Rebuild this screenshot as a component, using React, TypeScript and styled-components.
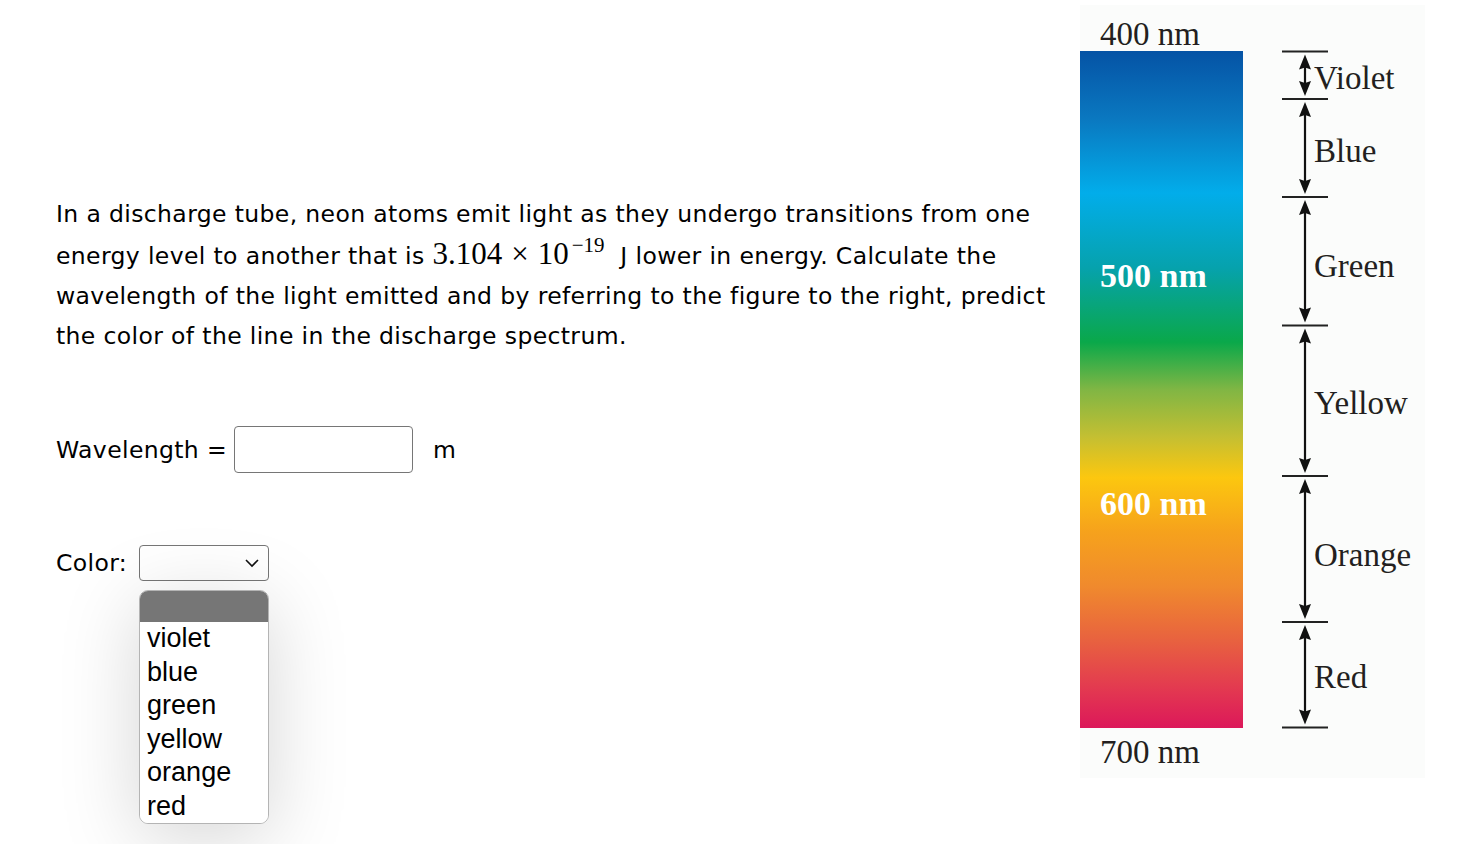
import React from "react";
import styled, { createGlobalStyle } from "styled-components";

const GlobalStyle = createGlobalStyle`
  html, body { margin: 0; padding: 0; background: #ffffff; }
  body { font-family: "DejaVu Sans", Verdana, sans-serif; color: #000; }
`;

const Page = styled.div`
  display: flex;
  align-items: flex-start;
  gap: 24px;
  padding: 5px 0 0 56px;
  width: 1468px;
  height: 844px;
  box-sizing: border-box;
  overflow: hidden;
`;

const LeftColumn = styled.div`
  width: 1000px;
  padding-top: 189px;
  font-size: 23.5px;
  letter-spacing: 0.37px;
`;

const Question = styled.p`
  margin: 0;
  line-height: 40px;
`;

const MathText = styled.span`
  font-family: "Liberation Serif", "DejaVu Serif", serif;
  font-size: 31px;
  letter-spacing: 0;
`;

const Times = styled.span`
  margin: 0 9px;
`;

const Sup = styled.sup`
  font-size: 21px;
  vertical-align: 12px;
  line-height: 0;
  margin-left: 3px;
  padding-right: 8px;
`;

const Row = styled.div<{ $top: number }>`
  display: flex;
  align-items: center;
  margin-top: ${(p) => p.$top}px;
`;

const Label = styled.span<{ $gap: number }>`
  margin-right: ${(p) => p.$gap}px;
`;

const TextInput = styled.input`
  width: 179px;
  height: 47px;
  box-sizing: border-box;
  border: 1.5px solid #767676;
  border-radius: 4px;
  background: #fff;
  margin: 0;
`;

const Unit = styled.span`
  margin-left: 20px;
`;

const SelectWrap = styled.div`
  position: relative;
  letter-spacing: 0;
`;

const SelectBox = styled.div`
  width: 130px;
  height: 36px;
  box-sizing: border-box;
  border: 1.5px solid #767676;
  border-radius: 4px;
  background: #fff;
  display: flex;
  align-items: center;
  justify-content: flex-end;
  padding-right: 8px;
`;

const Popup = styled.ul`
  position: absolute;
  top: 45px;
  left: 0;
  width: 130px;
  margin: 0;
  padding: 0;
  list-style: none;
  box-sizing: border-box;
  border: 1.5px solid #b4b4b4;
  border-radius: 9px;
  background: #fff;
  overflow: hidden;
  box-shadow: 0 14px 80px rgba(0, 0, 0, 0.17);
  font-family: "Liberation Sans", Arial, sans-serif;
  font-size: 27px;
`;

const Option = styled.li<{ $selected?: boolean }>`
  height: ${(p) => (p.$selected ? 31 : 33.5)}px;
  line-height: 33.5px;
  padding-left: 7px;
  background: ${(p) => (p.$selected ? "#767676" : "#fff")};
  color: #000;
`;

const Figure = styled.div`
  width: 345px;
  height: 773px;
  background: #fbfcfb;
  flex-shrink: 0;
`;

const colors = ["violet", "blue", "green", "yellow", "orange", "red"];

const ticks = [46.5, 94, 192, 320.5, 471, 617, 722.5];
const bands = [
  { name: "Violet", y: 83.5 },
  { name: "Blue", y: 157 },
  { name: "Green", y: 272 },
  { name: "Yellow", y: 409 },
  { name: "Orange", y: 561 },
  { name: "Red", y: 683 },
];

const AX = 225;

function ArrowHead({ tip, dir }: { tip: number; dir: 1 | -1 }) {
  const base = tip + dir * 15;
  const notch = base - dir * 2;
  return (
    <polygon
      points={`${AX},${tip} ${AX - 6},${base} ${AX},${notch} ${AX + 6},${base}`}
      fill="#111"
    />
  );
}

function Spectrum() {
  const segs = [];
  for (let i = 0; i < ticks.length - 1; i++) {
    const a = ticks[i] + 3;
    const b = ticks[i + 1] - 3;
    segs.push(
      <g key={i}>
        <line x1={AX} y1={a + 8} x2={AX} y2={b - 8} stroke="#111" strokeWidth={2.2} />
        <ArrowHead tip={a} dir={1} />
        <ArrowHead tip={b} dir={-1} />
      </g>
    );
  }
  return (
    <svg width="345" height="773" viewBox="0 0 345 773">
      <defs>
        <linearGradient id="spec" x1="0" y1="0" x2="0" y2="1">
          <stop offset="0" stopColor="#0553a5" />
          <stop offset="0.1" stopColor="#0a78c0" />
          <stop offset="0.21" stopColor="#02adea" />
          <stop offset="0.32" stopColor="#06a2ad" />
          <stop offset="0.43" stopColor="#0aa84a" />
          <stop offset="0.5" stopColor="#80b644" />
          <stop offset="0.57" stopColor="#c4bf32" />
          <stop offset="0.63" stopColor="#fcc70f" />
          <stop offset="0.71" stopColor="#f6a21c" />
          <stop offset="0.79" stopColor="#f08a2d" />
          <stop offset="0.87" stopColor="#e8623f" />
          <stop offset="0.94" stopColor="#e33a50" />
          <stop offset="1" stopColor="#dc185a" />
        </linearGradient>
      </defs>
      <rect x="0" y="46" width="163" height="677" fill="url(#spec)" />
      <g fontFamily="'Liberation Serif', 'DejaVu Serif', serif" fontSize="33" fill="#231f20">
        <text x="20" y="40">400 nm</text>
        <text x="20" y="758">700 nm</text>
      </g>
      <g fontFamily="'Liberation Serif', 'DejaVu Serif', serif" fontSize="34" fontWeight="bold" fill="#fff">
        <text x="20" y="282">500 nm</text>
        <text x="20" y="510">600 nm</text>
      </g>
      {ticks.map((t) => (
        <line key={t} x1="202" x2="248" y1={t} y2={t} stroke="#222" strokeWidth={2} />
      ))}
      {segs}
      <g fontFamily="'Liberation Serif', 'DejaVu Serif', serif" fontSize="33" fill="#231f20">
        {bands.map((b) => (
          <text key={b.name} x="234" y={b.y}>
            {b.name}
          </text>
        ))}
      </g>
    </svg>
  );
}

function Chevron() {
  return (
    <svg width="16" height="10" viewBox="0 0 16 10">
      <path d="M2 2 L8 8 L14 2" fill="none" stroke="#111" strokeWidth="1.6" />
    </svg>
  );
}

export default function App() {
  return (
    <>
      <GlobalStyle />
      <Page>
        <LeftColumn>
          <Question>
            In a discharge tube, neon atoms emit light as they undergo transitions from one
            energy level to another that is{" "}
            <MathText>
              3.104<Times>×</Times>10<Sup>−19</Sup>
            </MathText>{" "}
            J lower in energy. Calculate the wavelength of the light emitted and by referring
            to the figure to the right, predict the color of the line in the discharge
            spectrum.
          </Question>
          <Row $top={70}>
            <Label $gap={7}>Wavelength =</Label>
            <TextInput type="text" />
            <Unit>m</Unit>
          </Row>
          <Row $top={72}>
            <Label $gap={12}>Color:</Label>
            <SelectWrap>
              <SelectBox>
                <Chevron />
              </SelectBox>
              <Popup>
                <Option $selected>&nbsp;</Option>
                {colors.map((c) => (
                  <Option key={c}>{c}</Option>
                ))}
              </Popup>
            </SelectWrap>
          </Row>
        </LeftColumn>
        <Figure>
          <Spectrum />
        </Figure>
      </Page>
    </>
  );
}
